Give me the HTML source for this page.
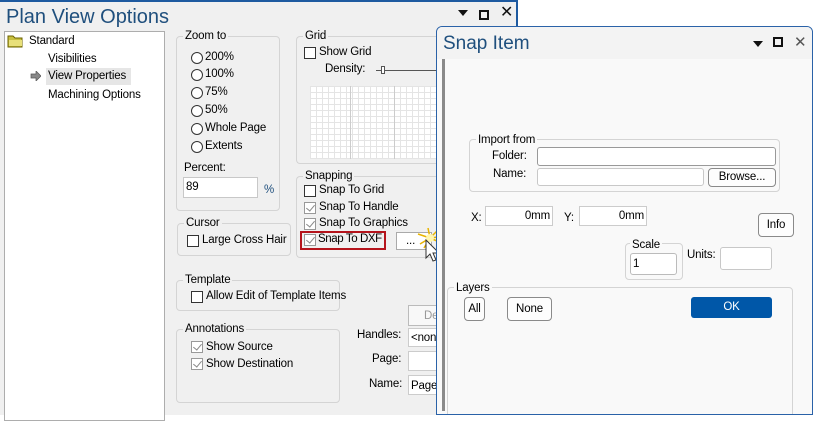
<!DOCTYPE html>
<html><head><meta charset="utf-8"><style>
*{box-sizing:border-box;margin:0;padding:0}
body{width:813px;height:415px;overflow:hidden;background:#fff;font-family:"Liberation Sans",sans-serif;font-size:11.5px;letter-spacing:-0.15px;color:#000;position:relative}
.a{position:absolute;white-space:nowrap;line-height:17px}
.grp{position:absolute;border:1px solid #d4d4d4;border-radius:4px}
.gl{position:absolute;background:#f0f0f0;padding:0 2px;top:-8px;left:6px;line-height:14px}
.cb{position:absolute;width:12px;height:12px;border:1px solid #333;background:#fff}
.cb.on{border-color:#999}
.cb.on:after{content:"";position:absolute;left:3px;top:0px;width:4px;height:7px;border:solid #888;border-width:0 1.5px 1.5px 0;transform:rotate(40deg)}
.rb{position:absolute;width:12px;height:12px;border:1px solid #333;border-radius:50%;background:#fff}
.fld{position:absolute;background:#fff;border:1px solid #c8c8c8;border-radius:3px}
.btn{position:absolute;background:#fdfdfd;border:1px solid #8a8a8a;border-radius:4px;text-align:center}
</style></head><body>
<!-- main window -->
<div class="a" style="left:0;top:0;width:518px;height:415px;background:#f0f0f0;border-top:2px solid #1e5aa0;border-right:2px solid #1e5aa0"></div>
<div class="a" style="left:6px;top:5px;font-size:20px;line-height:24px;letter-spacing:0;color:#1f4f7d">Plan View Options</div>
<div class="a" style="left:458px;top:10px;width:0;height:0;border-left:5px solid transparent;border-right:5px solid transparent;border-top:6px solid #111"></div>
<div class="a" style="left:479px;top:10px;width:10px;height:10px;border:2px solid #111"></div>
<div class="a" style="left:500px;top:4px;font-size:16px;color:#111">✕</div>
<!-- tree -->
<div class="a" style="left:4px;top:31px;width:161px;height:390px;background:#fff;border:1px solid #adadad"></div>
<svg class="a" style="left:7px;top:34px" width="17" height="14"><path d="M1 2h5l2 2h7v9H1z" fill="#c8c040" stroke="#6b6200"/><path d="M2 6h13v6H2z" fill="#e8e07a"/></svg>
<div class="a" style="left:29px;top:33px">Standard</div>
<div class="a" style="left:48px;top:51px">Visibilities</div>
<div class="a" style="left:46px;top:68px;width:85px;height:17px;background:#e6e6e6"></div>
<svg class="a" style="left:30px;top:71px" width="11" height="10"><path d="M1 3h5V0l5 5-5 5V7H1z" fill="#888" stroke="#555" stroke-width=".7"/></svg>
<div class="a" style="left:48px;top:68px">View Properties</div>
<div class="a" style="left:48px;top:87px">Machining Options</div>
<!-- zoom to -->
<div class="grp" style="left:176px;top:36px;width:104px;height:175px"><span class="gl">Zoom to</span></div>
<div class="rb" style="left:191px;top:52px"></div><div class="a" style="left:205px;top:49px">200%</div>
<div class="rb" style="left:191px;top:69px"></div><div class="a" style="left:205px;top:66px">100%</div>
<div class="rb" style="left:191px;top:87px"></div><div class="a" style="left:205px;top:84px">75%</div>
<div class="rb" style="left:191px;top:105px"></div><div class="a" style="left:205px;top:102px">50%</div>
<div class="rb" style="left:191px;top:123px"></div><div class="a" style="left:205px;top:120px">Whole Page</div>
<div class="rb" style="left:191px;top:141px"></div><div class="a" style="left:205px;top:138px">Extents</div>
<div class="a" style="left:184px;top:160px">Percent:</div>
<div class="fld" style="left:183px;top:177px;width:75px;height:21px;border-radius:0"></div>
<div class="a" style="left:186px;top:179px">89</div>
<div class="a" style="left:264px;top:182px;color:#1f4f7d">%</div>
<!-- grid -->
<div class="grp" style="left:296px;top:36px;width:160px;height:128px;border-right:none"><span class="gl">Grid</span></div>
<div class="cb" style="left:304px;top:47px;border-color:#333"></div><div class="a" style="left:319px;top:44px">Show Grid</div>
<div class="a" style="left:325px;top:61px">Density:</div>
<div class="a" style="left:376px;top:70px;width:70px;height:1px;background:#555"></div>
<div class="a" style="left:381px;top:66px;width:4px;height:8px;border:1px solid #555;background:#fff"></div>
<div class="a" style="left:310px;top:86px;width:130px;height:73px;background:#fff;background-image:linear-gradient(#e4e4e4 1px,transparent 1px),linear-gradient(90deg,#e4e4e4 1px,transparent 1px);background-size:6px 6px"></div>
<div class="a" style="left:350px;top:86px;width:1px;height:73px;background:#ccc"></div>
<div class="a" style="left:394px;top:86px;width:1px;height:73px;background:#ccc"></div>
<!-- snapping -->
<div class="grp" style="left:296px;top:176px;width:160px;height:82px;border-right:none"><span class="gl">Snapping</span></div>
<div class="cb" style="left:304px;top:185px;border-color:#333"></div><div class="a" style="left:319px;top:182px">Snap To Grid</div>
<div class="cb on" style="left:304px;top:202px"></div><div class="a" style="left:319px;top:199px">Snap To Handle</div>
<div class="cb on" style="left:304px;top:218px"></div><div class="a" style="left:319px;top:215px">Snap To Graphics</div>
<div class="a" style="left:300px;top:231px;width:86px;height:19px;border:2px solid #b5141c"></div>
<div class="cb on" style="left:304px;top:234px"></div><div class="a" style="left:318px;top:231px;letter-spacing:-0.4px">Snap To DXF</div>
<div class="a" style="left:396px;top:232px;width:36px;height:18px;background:#fff;border:1px solid #aaa"></div>
<div class="a" style="left:406px;top:233px">...</div>
<svg class="a" style="left:414px;top:226px" width="34" height="44"><g stroke="#e8b400" stroke-width="1.5"><path d="M16 12L4 8M16 12L6 18M16 12L14 2M16 12L24 4M16 12L32 10M16 12L30 18M16 12L10 22"/></g><circle cx="16" cy="12" r="4" fill="#fff6b0"/><path d="M12 14v18l4-4 3 7 3-1-3-7h6z" fill="#fff" stroke="#333"/></svg>
<!-- cursor -->
<div class="grp" style="left:177px;top:223px;width:114px;height:33px"><span class="gl">Cursor</span></div>
<div class="cb" style="left:187px;top:235px;border-color:#333"></div><div class="a" style="left:202px;top:232px">Large Cross Hair</div>
<!-- template -->
<div class="grp" style="left:176px;top:280px;width:164px;height:31px"><span class="gl">Template</span></div>
<div class="cb" style="left:191px;top:291px;border-color:#333"></div><div class="a" style="left:206px;top:288px">Allow Edit of Template Items</div>
<!-- annotations -->
<div class="grp" style="left:176px;top:329px;width:164px;height:74px"><span class="gl">Annotations</span></div>
<div class="cb on" style="left:191px;top:341px"></div><div class="a" style="left:206px;top:339px">Show Source</div>
<div class="cb on" style="left:191px;top:358px"></div><div class="a" style="left:206px;top:356px">Show Destination</div>
<div class="a" style="left:408px;top:305px;width:35px;height:21px;background:#f8f8f8;border:1px solid #bbb"></div><div class="a" style="left:424px;top:308px;color:#999">De</div>
<div class="a" style="left:357px;top:327px">Handles:</div>
<div class="a" style="left:408px;top:328px;width:35px;height:19px;background:#fff;border:1px solid #ccc"></div><div class="a" style="left:411px;top:330px">&lt;none</div>
<div class="a" style="left:372px;top:351px">Page:</div>
<div class="a" style="left:408px;top:351px;width:35px;height:20px;background:#fff;border:1px solid #ccc"></div>
<div class="a" style="left:369px;top:376px">Name:</div>
<div class="a" style="left:408px;top:375px;width:35px;height:20px;background:#fff;border:1px solid #ccc"></div><div class="a" style="left:411px;top:378px">Page</div>
<!-- snap item window -->
<div class="a" style="left:436px;top:26px;width:377px;height:389px;background:#f9f9f9;border:1.5px solid #2a62a8;border-radius:6px 6px 0 0;overflow:hidden">
  <div class="a" style="left:0;top:0;width:100%;height:32px;background:#f3f3f3"></div>
  <div class="a" style="left:5px;top:32px;width:2.5px;height:352px;background:#8a8a8a"></div>
  <div class="grp" style="left:10px;top:260px;width:346px;height:140px"><span class="gl" style="background:#f9f9f9;top:-7px;left:6px">Layers</span></div>
</div>
<div class="a" style="left:443px;top:33px;font-size:19px;line-height:22px;letter-spacing:0;color:#1f4f7d">Snap Item</div>
<div class="a" style="left:753px;top:41px;width:0;height:0;border-left:5px solid transparent;border-right:5px solid transparent;border-top:6px solid #111"></div>
<div class="a" style="left:773px;top:37px;width:10px;height:10px;border:2px solid #111"></div>
<div class="a" style="left:794px;top:34px;font-size:15px;color:#555">✕</div>
<!-- import -->
<div class="grp" style="left:469px;top:139px;width:311px;height:53px"><span class="gl" style="background:#f9f9f9;top:-7px">Import from</span></div>
<div class="a" style="left:492px;top:148px">Folder:</div>
<div class="fld" style="left:537px;top:147px;width:239px;height:19px;border-color:#999"></div>
<div class="a" style="left:493px;top:166px">Name:</div>
<div class="fld" style="left:537px;top:168px;width:167px;height:18px"></div>
<div class="btn" style="left:708px;top:168px;width:68px;height:19px;line-height:17px">Browse...</div>
<div class="a" style="left:471px;top:210px">X:</div>
<div class="a" style="left:485px;top:206px;width:68px;height:20px;background:#fff;border:1px solid #ccc"></div><div class="a" style="left:485px;top:208px;width:65px;text-align:right">0mm</div>
<div class="a" style="left:564px;top:210px">Y:</div>
<div class="a" style="left:579px;top:206px;width:68px;height:20px;background:#fff;border:1px solid #ccc"></div><div class="a" style="left:579px;top:208px;width:65px;text-align:right">0mm</div>
<div class="btn" style="left:758px;top:213px;width:36px;height:24px;line-height:22px">Info</div>
<div class="grp" style="left:625px;top:243px;width:58px;height:37px"><span class="gl" style="background:#f9f9f9;top:-6px;left:4px">Scale</span></div>
<div class="fld" style="left:630px;top:253px;width:47px;height:22px;border-color:#bbb"></div><div class="a" style="left:633px;top:256px">1</div>
<div class="a" style="left:687px;top:247px">Units:</div>
<div class="fld" style="left:720px;top:247px;width:52px;height:23px"></div>
<div class="btn" style="left:464px;top:297px;width:21px;height:24px;line-height:22px">All</div>
<div class="btn" style="left:507px;top:297px;width:45px;height:24px;line-height:22px">None</div>
<div class="a" style="left:691px;top:297px;width:81px;height:21px;background:#0057a8;border-radius:3px;color:#fff;text-align:center;line-height:20px">OK</div>
</body></html>
